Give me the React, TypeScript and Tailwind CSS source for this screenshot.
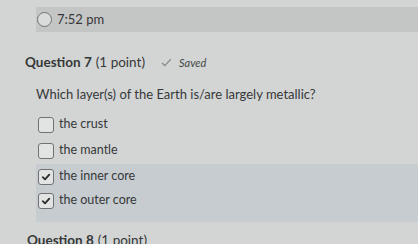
import React from 'react';

const Box = ({ checked }: { checked?: boolean }) => (
  <span className="flex h-[16px] w-[16px] shrink-0 items-center justify-center rounded-[3px] border border-[#6f7272] bg-[#e2e4e4]">
    {checked && (
      <svg width="10" height="10" viewBox="0 0 10 10">
        <path d="M1.8 5.2 L4 7.4 L8.3 2.6" fill="none" stroke="#2c2c2c" strokeWidth="1.8" strokeLinecap="round" strokeLinejoin="round" />
      </svg>
    )}
  </span>
);

const Option = ({ label, checked }: { label: string; checked?: boolean }) => (
  <div className={`flex items-center gap-[5px] pl-[2px] ${checked ? 'h-[24px]' : 'h-[26px]'}`}>
    <Box checked={checked} />
    <span className="text-[12.5px]">{label}</span>
  </div>
);

export default function App() {
  return (
    <div className="h-[244px] w-[418px] overflow-hidden bg-[#d3d5d5] pt-[7px] text-[#363838]" style={{ fontFamily: 'Lato, "Open Sans", sans-serif' }}>
      <div className="ml-[36px] flex h-[25px] items-center gap-[5px] bg-[#c4c5c5] pl-[1px]">
        <span className="h-[15px] w-[15px] rounded-full border border-[#707272] bg-[#dadcdc]" />
        <span className="text-[13px]">7:52 pm</span>
      </div>

      <div className="mt-[20px] flex items-baseline pl-[25px]">
        <span className="text-[13.5px] font-bold">Question 7</span>
        <span className="ml-[4px] text-[13.5px]">(1 point)</span>
        <svg className="ml-[16px]" width="11" height="9" viewBox="0 0 11 9">
          <path d="M1 5 L3.8 7.6 L9.8 1.2" fill="none" stroke="#8a8d8e" strokeWidth="1.3" />
        </svg>
        <span className="ml-[7px] text-[11px] italic text-[#454747]">Saved</span>
      </div>

      <div className="mt-[13px] pl-[36px] text-[13px]">Which layer(s) of the Earth is/are largely metallic?</div>

      <div className="ml-[36px] mt-[7px] flex flex-col">
        <Option label="the crust" />
        <Option label="the mantle" />
        <div className="bg-[#c6ccd0] pb-[9px] pt-[1px]">
          <Option label="the inner core" checked />
          <Option label="the outer core" checked />
        </div>
      </div>

      <div className="mt-[8px] flex items-baseline pl-[27px]">
        <span className="text-[13.5px] font-bold">Question 8</span>
        <span className="ml-[4px] text-[13.5px]">(1 point)</span>
      </div>
    </div>
  );
}
